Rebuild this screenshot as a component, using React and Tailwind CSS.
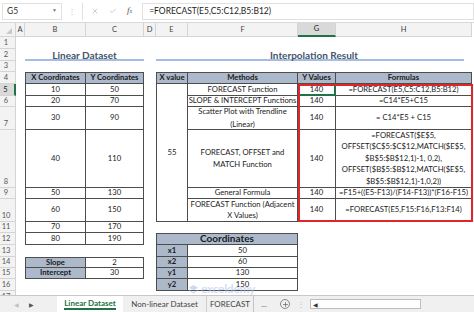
import React from 'react';
import clsx from 'clsx';
import { X, Check, Plus } from 'lucide-react';

// sheet column -> grid column line (col 1 is the row header)
const COL = {
  A: 'col-start-2',
  B: 'col-start-3',
  C: 'col-start-4',
  D: 'col-start-5',
  E: 'col-start-6',
  F: 'col-start-7',
  G: 'col-start-8',
  H: 'col-start-9',
};

// sheet row -> grid row line (row 1 is the column header)
const ROW = {
  1: 'row-start-2',
  2: 'row-start-3',
  3: 'row-start-4',
  4: 'row-start-5',
  5: 'row-start-6',
  6: 'row-start-7',
  7: 'row-start-8',
  8: 'row-start-9',
  9: 'row-start-10',
  10: 'row-start-11',
  11: 'row-start-12',
  12: 'row-start-13',
  13: 'row-start-14',
  14: 'row-start-15',
  15: 'row-start-16',
  16: 'row-start-17',
  17: 'row-start-18',
};

const LINE = 'border-[#4d4d4d]';

const Cell = ({ c, r, span, t, l, head, bold, className, children }) => (
  <div
    className={clsx(
      COL[c],
      ROW[r],
      span,
      'flex items-center justify-center border-r border-b text-center leading-[11.5px] whitespace-nowrap',
      LINE,
      t && 'border-t',
      l && 'border-l',
      head ? 'bg-[#acb9ca] text-[#1a1a1a]' : 'bg-white',
      (head || bold) && 'font-bold',
      className
    )}
  >
    {children}
  </div>
);

const FormulaBar = () => (
  <div className="flex h-[23px] shrink-0 items-center border-b border-[#d9d9d9] bg-white text-[8.5px]">
    <div className="ml-[2px] flex h-[17px] w-[60px] items-center justify-between border border-[#e1e1e1] px-[4px] text-[#333]">
      <span>G5</span>
      <span className="text-[5px] text-[#777]">▼</span>
    </div>
    <span className="ml-[6px] text-[8px] text-[#c4c4c4]">⋮</span>
    <div className="ml-[6px] flex h-[17px] items-center gap-[10px] border-l border-[#e1e1e1] pl-[8px] pr-[10px]">
      <X className="h-[8px] w-[8px] text-[#b3b3b3]" strokeWidth={2} />
      <Check className="h-[8px] w-[8px] text-[#b3b3b3]" strokeWidth={2} />
      <span className="font-['Liberation_Serif',serif] text-[9px] italic text-[#555]">
        f<span className="text-[6px]">x</span>
      </span>
    </div>
    <div className="flex h-[17px] flex-1 items-center border border-[#e1e1e1] pl-[6px] text-[#222]">
      =FORECAST(E5,C5:C12,B5:B12)
    </div>
  </div>
);

const ColHeads = () => {
  const heads = ['A', 'B', 'C', 'D', 'E', 'F', 'G', 'H'];
  return (
    <>
      <div className="col-start-1 row-start-1 flex items-end justify-end border-r border-b border-[#d4d4d4] bg-[#f3f3f3] pr-[3px] pb-[2px]">
        <div className="h-0 w-0 border-t-[6px] border-l-[6px] border-t-transparent border-l-transparent border-b-0 border-r-[6px] border-r-[#c9c9c9]" />
      </div>
      {heads.map((h) => (
        <div
          key={h}
          className={clsx(
            COL[h],
            'row-start-1 flex items-center justify-center border-r border-[#d4d4d4] text-[7.5px]',
            h === 'G'
              ? 'border-b-2 border-b-[#217346] bg-[#d9d9d9] text-[#222]'
              : 'border-b bg-[#f3f3f3] text-[#444]'
          )}
        >
          {h}
        </div>
      ))}
    </>
  );
};

const RowHeads = () => (
  <>
    {Object.keys(ROW).map((n) => (
      <div
        key={n}
        className={clsx(
          ROW[n],
          'col-start-1 flex items-end justify-center border-b border-[#d4d4d4] pr-[3px] text-[7.5px] leading-[11px]',
          n === '5'
            ? 'border-r-2 border-r-[#217346] bg-[#d9d9d9] text-[#222]'
            : 'border-r bg-[#f3f3f3] text-[#555]'
        )}
      >
        {n}
      </div>
    ))}
  </>
);

const linear = [
  [5, 10, 50],
  [6, 20, 70],
  [7, 30, 90],
  [8, 40, 110],
  [9, 50, 130],
  [10, 60, 150],
  [11, 70, 170],
  [12, 80, 190],
];

const methods = [
  [5, 'FORECAST Function', '=FORECAST(E5,C5:C12,B5:B12)'],
  [6, 'SLOPE & INTERCEPT Functions', '=C14*E5+C15'],
  [7, ['Scatter Plot with Trendline', '(Linear)'], '= C14*E5 + C15'],
  [
    8,
    ['FORECAST, OFFSET and', 'MATCH Function'],
    [
      '=FORECAST($E$5,',
      'OFFSET($C$5:$C$12,MATCH($E$5,',
      '$B$5:$B$12,1)-1, 0,2),',
      'OFFSET($B$5:$B$12,MATCH($E$5,',
      '$B$5:$B$12,1)-1,0,2))',
    ],
  ],
  [9, 'General Formula', '=F15+((E5-F13)/(F14-F13))*(F16-F15)'],
  [10, ['FORECAST Function (Adjacent', 'X Values)'], '=FORECAST(E5,F15:F16,F13:F14)'],
];

const coords = [
  [13, 'x1', 50],
  [14, 'x2', 60],
  [15, 'y1', 130],
  [16, 'y2', 150],
];

const Lines = ({ text, gap }) =>
  Array.isArray(text) ? (
    <div className={clsx('flex flex-col', gap)}>
      {text.map((t) => (
        <span key={t}>{t}</span>
      ))}
    </div>
  ) : (
    text
  );

const Sheet = () => (
  <div className="min-h-0 flex-1 overflow-hidden">
    <div className="grid grid-cols-[16px_9px_61px_58px_12px_32px_110px_38px_136px] grid-rows-[14px_12px_12px_11px_12px_12px_11px_23px_58px_11px_23px_11px_12px_12px_11px_11px_12px_12px] text-[7.7px] text-[#222]">
      <ColHeads />
      <RowHeads />

      {/* titles */}
      <div className="col-span-2 col-start-3 row-start-3 flex items-center justify-center border-b-2 border-[#a7bce2] pt-[1px] text-[10px] leading-none font-bold text-[#44546a]">
        Linear Dataset
      </div>
      <div className="col-span-4 col-start-6 row-start-3 mr-[8px] flex items-center justify-center border-b-2 border-[#a7bce2] pt-[1px] pl-[8px] text-[10px] leading-none font-bold text-[#44546a]">
        Interpolation Result
      </div>

      {/* linear dataset */}
      <Cell c="B" r={4} t l head>X Coordinates</Cell>
      <Cell c="C" r={4} t head>Y Coordinates</Cell>
      {linear.map(([r, x, y]) => (
        <React.Fragment key={r}>
          <Cell c="B" r={r} l>{x}</Cell>
          <Cell c="C" r={r}>{y}</Cell>
        </React.Fragment>
      ))}
      <Cell c="B" r={14} t l head>Slope</Cell>
      <Cell c="C" r={14} t>2</Cell>
      <Cell c="B" r={15} l head>Intercept</Cell>
      <Cell c="C" r={15}>30</Cell>

      {/* interpolation result */}
      <Cell c="E" r={4} t l head>X value</Cell>
      <Cell c="F" r={4} t head>Methods</Cell>
      <Cell c="G" r={4} t head>Y Values</Cell>
      <Cell c="H" r={4} t head>Formulas</Cell>
      <Cell c="E" r={5} l span="row-span-6">55</Cell>
      {methods.map(([r, m, f]) => (
        <React.Fragment key={r}>
          <Cell c="F" r={r}><Lines text={m} gap={r === 7 ? 'gap-[1px]' : undefined} /></Cell>
          <Cell c="G" r={r}>140</Cell>
          <Cell c="H" r={r}><Lines text={f} /></Cell>
        </React.Fragment>
      ))}

      {/* active cell and highlight frame */}
      <div className="col-start-8 row-start-6 z-10 border-2 border-[#217346]" />
      <div className="col-span-2 col-start-8 row-span-6 row-start-6 z-20 -mr-[1px] border-2 border-[#e0262b]" />

      {/* coordinates */}
      <Cell c="E" r={12} t l head span="col-span-2" className="text-[10px]">Coordinates</Cell>
      {coords.map(([r, k, v]) => (
        <React.Fragment key={r}>
          <Cell c="E" r={r} l head>{k}</Cell>
          <Cell c="F" r={r}>{v}</Cell>
        </React.Fragment>
      ))}
    </div>
  </div>
);

const Tabs = () => (
  <div className="flex h-[17px] shrink-0 items-stretch border-t border-[#c8c8c8] bg-[#f0f0f0] text-[8px] text-[#444]">
    <div className="flex w-[57px] items-center gap-[10px] pl-[14px] text-[6px]">
      <span className="text-[#c2c2c2]">◀</span>
      <span className="text-[#555]">▶</span>
    </div>
    <div className="flex w-[66px] items-center justify-center bg-white font-bold text-[#217346]">
      <span className="border-b-2 border-[#217346] leading-[10px]">Linear Dataset</span>
    </div>
    <div className="flex w-[84px] items-center justify-center border-r border-[#d0d0d0]">
      Non-linear Dataset
    </div>
    <div className="flex w-[47px] items-center justify-center border-r border-[#c4c4c4]">FORECAST</div>
    <div className="flex w-[20px] items-center justify-center text-[#666]">...</div>
    <div className="flex w-[22px] items-center justify-center">
      <div className="flex h-[10px] w-[10px] items-center justify-center rounded-full border border-[#888]">
        <Plus className="h-[7px] w-[7px] text-[#666]" strokeWidth={2.5} />
      </div>
    </div>
    <div className="flex w-[10px] items-center justify-center text-[8px] text-[#bbb]">⋮</div>
    <div className="my-[3px] ml-[4px] flex w-[111px] items-center border border-[#bdbdbd] bg-white pl-[2px]">
      <span className="text-[6px] text-[#333]">◀</span>
    </div>
  </div>
);

// faint site watermark lying over the sheet corner
const Watermark = () => (
  <div className="pointer-events-none absolute top-[283px] left-[188px] z-30 flex items-center gap-[2px] opacity-50">
    <svg width="11" height="11" viewBox="0 0 12 12">
      <path d="M6 1 L11 4 L6 7 L1 4 Z" fill="#9fb6e4" />
      <path d="M1 6.5 L6 9.5 L11 6.5" stroke="#9fb6e4" strokeWidth="1.4" fill="none" />
    </svg>
    <span className="text-[12px] leading-none font-bold tracking-tight text-[#a9bde8]">exceldemy</span>
  </div>
);

export default function App() {
  return (
    <div className="relative flex h-[312px] w-[474px] flex-col overflow-hidden bg-white font-[Lato,'Liberation_Sans',sans-serif] text-[#262626]">
      <FormulaBar />
      <Sheet />
      <Tabs />
      <Watermark />
    </div>
  );
}
